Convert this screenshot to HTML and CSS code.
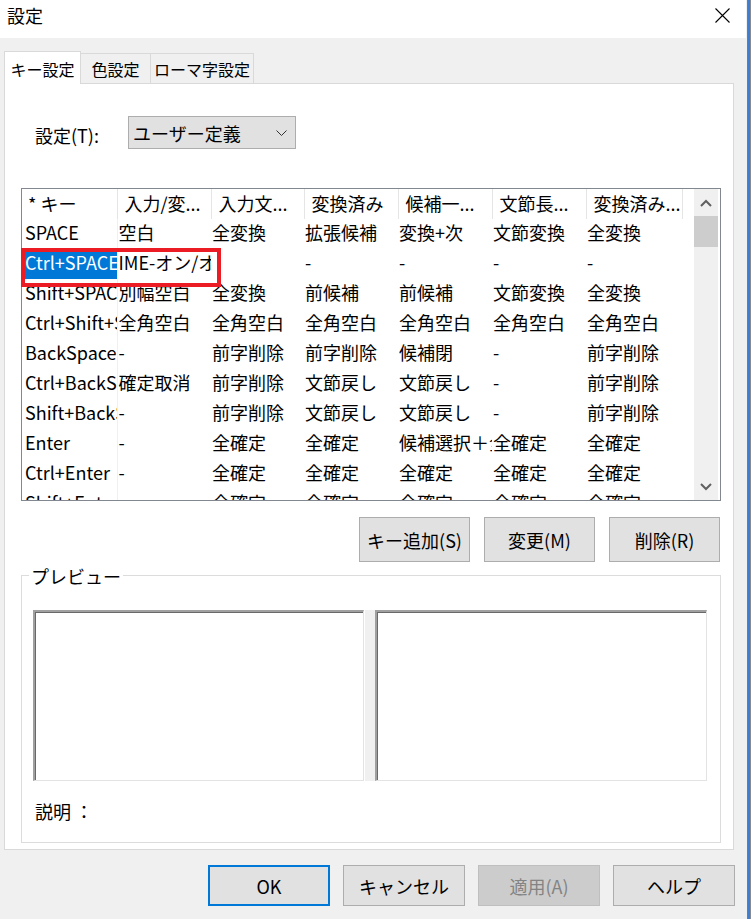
FILE: index.html
```html
<!DOCTYPE html>
<html lang="ja">
<head>
    <meta charset="UTF-8">
    <title>設定</title>
    <link rel="stylesheet" href="styles.css">
</head>
<body>
<div class="screen">
    <div class="window">
        <div class="titlebar">
            <span class="title">設定</span>
            <svg class="close" width="15" height="15" viewBox="0 0 15 15">
                <path d="M0.5 0.5 L14.5 14.5 M14.5 0.5 L0.5 14.5" stroke="#000" stroke-width="1.1" fill="none"/>
            </svg>
        </div>

        <div class="client">
            <div class="tabs">
                <div class="tab active">キー設定</div>
                <div class="tab tab-color">色設定</div>
                <div class="tab tab-roma">ローマ字設定</div>
            </div>

            <div class="panel">
                <div class="setting-row">
                    <span class="setting-label">設定(T):</span>
                    <div class="combo">
                        <span>ユーザー定義</span>
                        <svg width="11" height="6" viewBox="0 0 11 6">
                            <path d="M0.5 0.5 L5.5 5.5 L10.5 0.5" stroke="#333" stroke-width="1" fill="none"/>
                        </svg>
                    </div>
                </div>

                <div class="listview">
                    <div class="list-area">
                        <table class="keys">
                            <colgroup>
                                <col style="width:95px"><col style="width:94px"><col style="width:93px"><col style="width:94px"><col style="width:94px"><col style="width:94px"><col style="width:96px">
                            </colgroup>
                            <thead>
                                <tr>
                                    <th>* キー</th><th>入力/変...</th><th>入力文...</th><th>変換済み</th><th>候補一...</th><th>文節長...</th><th>変換済み...</th>
                                </tr>
                            </thead>
                            <tbody>
                                <tr><td>SPACE</td><td>空白</td><td>全変換</td><td>拡張候補</td><td>変換+次</td><td>文節変換</td><td>全変換</td></tr>
                                <tr><td class="sel">Ctrl+SPACE</td><td>IME-オン/オフ</td><td></td><td>-</td><td>-</td><td>-</td><td>-</td></tr>
                                <tr><td>Shift+SPACE</td><td>別幅空白</td><td>全変換</td><td>前候補</td><td>前候補</td><td>文節変換</td><td>全変換</td></tr>
                                <tr><td>Ctrl+Shift+SPACE</td><td>全角空白</td><td>全角空白</td><td>全角空白</td><td>全角空白</td><td>全角空白</td><td>全角空白</td></tr>
                                <tr><td>BackSpace</td><td>-</td><td>前字削除</td><td>前字削除</td><td>候補閉</td><td>-</td><td>前字削除</td></tr>
                                <tr><td>Ctrl+BackSpace</td><td>確定取消</td><td>前字削除</td><td>文節戻し</td><td>文節戻し</td><td>-</td><td>前字削除</td></tr>
                                <tr><td>Shift+BackSpace</td><td>-</td><td>前字削除</td><td>文節戻し</td><td>文節戻し</td><td>-</td><td>前字削除</td></tr>
                                <tr><td>Enter</td><td>-</td><td>全確定</td><td>全確定</td><td>候補選択＋全確定</td><td>全確定</td><td>全確定</td></tr>
                                <tr><td>Ctrl+Enter</td><td>-</td><td>全確定</td><td>全確定</td><td>全確定</td><td>全確定</td><td>全確定</td></tr>
                                <tr><td>Shift+Enter</td><td>-</td><td>全確定</td><td>全確定</td><td>全確定</td><td>全確定</td><td>全確定</td></tr>
                            </tbody>
                        </table>
                    </div>
                    <div class="scrollbar">
                        <div class="arrow">
                            <svg width="12" height="8" viewBox="0 0 12 8"><path d="M1 7 L6 2 L11 7" stroke="#606060" stroke-width="2" fill="none"/></svg>
                        </div>
                        <div class="thumb"></div>
                        <div class="track"></div>
                        <div class="arrow">
                            <svg width="12" height="8" viewBox="0 0 12 8"><path d="M1 1 L6 6 L11 1" stroke="#606060" stroke-width="2" fill="none"/></svg>
                        </div>
                    </div>
                    <!-- annotation frame -->
                    <div class="mark"></div>
                </div>

                <div class="list-buttons">
                    <button class="btn">キー追加(S)</button>
                    <button class="btn">変更(M)</button>
                    <button class="btn">削除(R)</button>
                </div>

                <div class="group">
                    <div class="legend">プレビュー</div>
                    <div class="previews">
                        <div class="pbox"></div>
                        <div class="splitter"></div>
                        <div class="pbox pbox-right"></div>
                    </div>
                    <div class="desc">説明 ：</div>
                </div>
            </div>

            <div class="dialog-buttons">
                <button class="dbtn default">OK</button>
                <button class="dbtn">キャンセル</button>
                <button class="dbtn disabled">適用(A)</button>
                <button class="dbtn">ヘルプ</button>
            </div>
        </div>
    </div>
    <div class="edge"></div>
</div>
</body>
</html>
```

FILE: styles.css
```css
body {
    margin: 0;
    padding: 0;
    font-family: "Noto Sans CJK JP", "Noto Sans", sans-serif;
    font-size: 18px;
    color: #000;
}

.screen {
    display: flex;
    width: 751px;
    height: 919px;
    overflow: hidden;
}

.window {
    width: 746px;
    background-color: #f0f0f0;
    display: flex;
    flex-direction: column;
}

.edge {
    width: 5px;
    background: linear-gradient(to right, #f0f0f0 0 1px, #7a7a7a 1px 2px, #3b7fd4 2px 4px, #8a8a8a 4px 5px);
}

/* barre de titre */
.titlebar {
    height: 38px;
    background-color: #fff;
    display: flex;
    justify-content: space-between;
    align-items: flex-start;
    padding: 0 16px 0 7px;
    box-sizing: border-box;
}

.title {
    line-height: 20px;
    margin-top: 5px;
}

.close {
    margin-top: 8px;
}

.client {
    padding: 13px 0 0 4px;
}

/* onglets */
.tabs {
    display: flex;
    align-items: flex-end;
    height: 32px;
}

.tab {
    height: 30px;
    box-sizing: border-box;
    border: 1px solid #d9d9d9;
    border-left: none;
    border-bottom: none;
    display: flex;
    align-items: center;
    justify-content: center;
    white-space: nowrap;
    font-size: 16px;
    line-height: 20px;
    background-color: #f0f0f0;
}

.tab.active {
    width: 77px;
    height: 33px;
    margin-bottom: -1px;
    border-left: 1px solid #d9d9d9;
    background-color: #fff;
    position: relative;
    z-index: 1;
    padding-top: 2px;
}

.tab-color {
    width: 70px;
}

.tab-roma {
    width: 103px;
}

.panel {
    width: 730px;
    height: 767px;
    box-sizing: border-box;
    border: 1px solid #d9d9d9;
    background-color: #fff;
}

.setting-row {
    display: flex;
    align-items: center;
    margin-top: 32px;
    padding-left: 30px;
}

.setting-label {
    width: 93px;
    line-height: 20px;
    padding-top: 4px;
}

.combo {
    width: 168px;
    height: 33px;
    box-sizing: border-box;
    border: 1px solid #adadad;
    background-color: #e1e1e1;
    display: flex;
    align-items: center;
    justify-content: space-between;
    padding: 0 8px 0 4px;
    line-height: 20px;
}

/* liste des touches */
.listview {
    position: relative;
    margin: 39px 0 0 16px;
    width: 700px;
    height: 313px;
    box-sizing: border-box;
    border: 1px solid #828790;
    display: flex;
}

.list-area {
    flex: 1;
    overflow: hidden;
}

.keys {
    table-layout: fixed;
    width: 660px;
    border-collapse: collapse;
}

.keys th,
.keys td {
    height: 26px;
    padding: 0 0 4px 1px;
    white-space: nowrap;
    overflow: hidden;
    text-align: left;
    font-weight: normal;
    line-height: 20px;
}

.keys th {
    height: 28px;
    padding-bottom: 2px;
    padding-left: 7px;
    border-right: 1px solid #e5e5e5;
}

.keys th:first-child {
    padding-left: 6px;
}

.keys td:first-child {
    padding-left: 3px;
    border-right: 1px solid #f0f0f0;
}

.keys td.sel {
    background-color: #0078d7;
    color: #fff;
}

.scrollbar {
    width: 24px;
    margin-right: 2px;
    background-color: #f0f0f0;
    display: flex;
    flex-direction: column;
}

.scrollbar .arrow {
    height: 27px;
    display: flex;
    align-items: center;
    justify-content: center;
}

.scrollbar .thumb {
    height: 31px;
    background-color: #cdcdcd;
}

.scrollbar .track {
    flex: 1;
}

.mark {
    position: absolute;
    left: -1px;
    top: 59px;
    width: 200px;
    height: 39px;
    box-sizing: border-box;
    border: 4px solid #ec1c24;
}

.list-buttons {
    display: flex;
    justify-content: flex-end;
    gap: 14px;
    margin-top: 16px;
    padding-right: 13px;
}

.btn,
.dbtn {
    font-family: inherit;
    font-size: 18px;
    color: #000;
    background-color: #e1e1e1;
    border: 1px solid #adadad;
    padding: 0;
    line-height: 20px;
}

.btn {
    width: 111px;
    height: 45px;
}

/* zone aperçu */
.group {
    margin: 13px 0 0 16px;
    width: 700px;
    height: 268px;
    box-sizing: border-box;
    border: 1px solid #dcdcdc;
}

.legend {
    width: fit-content;
    margin: -10px 0 0 7px;
    padding: 0 2px;
    background-color: #fff;
    line-height: 20px;
}

.previews {
    display: flex;
    margin: 24px 0 0 11px;
    height: 171px;
}

.pbox {
    width: 331px;
    box-sizing: border-box;
    border-top: 2px solid #a0a0a0;
    border-left: 2px solid #a0a0a0;
    border-right: 1px solid #e3e3e3;
    border-bottom: 1px solid #e3e3e3;
    box-shadow: inset 1px 1px 0 #696969;
}

.pbox-right {
    width: 332px;
}

.splitter {
    width: 10px;
    margin-left: 1px;
    background-color: #f0f0f0;
}

.desc {
    margin: 20px 0 0 13px;
    line-height: 20px;
}

.dialog-buttons {
    display: flex;
    justify-content: flex-end;
    gap: 13px;
    margin-top: 15px;
    padding-right: 11px;
}

.dbtn {
    width: 122px;
    height: 41px;
}

.dbtn.default {
    border: 2px solid #0078d7;
}

.dbtn.disabled {
    background-color: #cccccc;
    border-color: #bfbfbf;
    color: #838383;
}
```
